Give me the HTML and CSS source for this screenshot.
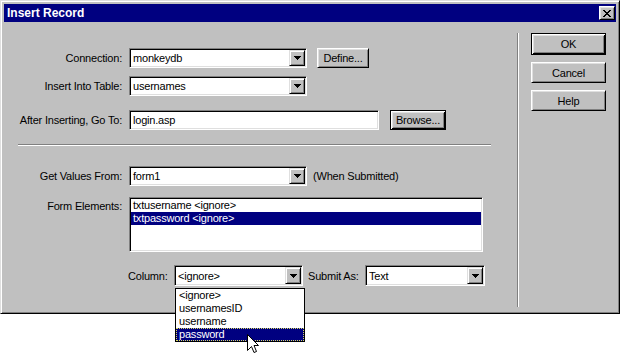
FILE: index.html
```html
<!DOCTYPE html>
<html lang="en">

<head>
    <meta charset="UTF-8">
    <title>Insert Record</title>
    <link rel="stylesheet" href="styles.css">
</head>

<body>
    <section class="dialog">
        <header class="titlebar">
            <span class="title">Insert Record</span>
            <button class="close">
                <svg width="8" height="7" viewBox="0 0 8 7"><path d="M0 0h2v1H0zM6 0h2v1H6zM1 1h2v1H1zM5 1h2v1H5zM2 2h4v1H2zM3 3h2v1H3zM2 4h4v1H2zM1 5h2v1H1zM5 5h2v1H5zM0 6h2v1H0zM6 6h2v1H6z"/></svg>
            </button>
        </header>

        <div class="dialog-body">
            <main class="form">
                <div class="row">
                    <label class="lbl">Connection:</label>
                    <div class="combo w-178"><span class="value">monkeydb</span><span class="drop"><svg width="7" height="4" viewBox="0 0 7 4"><path d="M0 0h7v1H0zM1 1h5v1H1zM2 2h3v1H2zM3 3h1v1H3z"/></svg></span></div>
                    <button class="btn define">Define...</button>
                </div>

                <div class="row r-table">
                    <label class="lbl">Insert Into Table:</label>
                    <div class="combo w-178"><span class="value">usernames</span><span class="drop"><svg width="7" height="4" viewBox="0 0 7 4"><path d="M0 0h7v1H0zM1 1h5v1H1zM2 2h3v1H2zM3 3h1v1H3z"/></svg></span></div>
                </div>

                <div class="row r-goto">
                    <label class="lbl">After Inserting, Go To:</label>
                    <div class="field w-250"><span class="value">login.asp</span></div>
                    <button class="btn default browse">Browse...</button>
                </div>

                <hr class="sep">

                <div class="row">
                    <label class="lbl">Get Values From:</label>
                    <div class="combo w-178"><span class="value">form1</span><span class="drop"><svg width="7" height="4" viewBox="0 0 7 4"><path d="M0 0h7v1H0zM1 1h5v1H1zM2 2h3v1H2zM3 3h1v1H3z"/></svg></span></div>
                    <span class="note">(When Submitted)</span>
                </div>

                <div class="row r-list">
                    <label class="lbl">Form Elements:</label>
                    <div class="listbox">
                        <div class="opt">txtusername &lt;ignore&gt;</div>
                        <div class="opt sel">txtpassword &lt;ignore&gt;</div>
                    </div>
                </div>

                <div class="row r-column">
                    <label class="col-lbl">Column:</label>
                    <div class="combo w-129"><span class="value">&lt;ignore&gt;</span><span class="drop"><svg width="7" height="4" viewBox="0 0 7 4"><path d="M0 0h7v1H0zM1 1h5v1H1zM2 2h3v1H2zM3 3h1v1H3z"/></svg></span></div>
                    <label class="submit-lbl">Submit As:</label>
                    <div class="combo w-120"><span class="value">Text</span><span class="drop"><svg width="7" height="4" viewBox="0 0 7 4"><path d="M0 0h7v1H0zM1 1h5v1H1zM2 2h3v1H2zM3 3h1v1H3z"/></svg></span></div>
                </div>
            </main>

            <div class="vsep"></div>

            <aside class="actions">
                <button class="btn default">OK</button>
                <button class="btn">Cancel</button>
                <button class="btn">Help</button>
            </aside>
        </div>

        <!-- open dropdown of the Column combo -->
        <ul class="droplist">
            <li>&lt;ignore&gt;</li>
            <li>usernamesID</li>
            <li>username</li>
            <li class="sel">password</li>
        </ul>

        <svg class="cursor" width="13" height="21" viewBox="0 0 13 21">
            <path d="M0.5 0.5V16.5L4.5 12.5L7 18.5L9.5 17.5L7 11.5H11.5Z" fill="#fff" stroke="#000" stroke-width="1" stroke-linejoin="miter"/>
        </svg>
    </section>
</body>

</html>
```

FILE: styles.css
```css
* {
    box-sizing: border-box;
}

html,
body {
    min-height: 100vh;
}

body {
    margin: 0;
    background-color: #fff;
    font-family: "Liberation Sans", Arial, sans-serif;
    font-size: 11px;
    letter-spacing: -0.2px;
    color: #000;
}

.dialog {
    position: relative;
    width: 620px;
    height: 314px;
    padding: 3px;
    background-color: #c0c0c0;
    border: 1px solid;
    border-color: #dfdfdf #000 #000 #dfdfdf;
    box-shadow: inset 1px 1px #fff, inset -1px -1px #808080;
    display: flex;
    flex-direction: column;
}

/* title bar */
.titlebar {
    height: 18px;
    flex-shrink: 0;
    background-color: #000080;
    display: flex;
    align-items: center;
    justify-content: space-between;
    padding: 0 1px 0 3px;
}

.title {
    color: #fff;
    font-weight: bold;
    font-size: 12px;
    letter-spacing: 0;
}

.close {
    width: 16px;
    height: 14px;
    padding: 0;
    background-color: #c0c0c0;
    border: 1px solid;
    border-color: #fff #000 #000 #fff;
    box-shadow: inset 1px 1px #dfdfdf, inset -1px -1px #808080;
    display: flex;
    align-items: center;
    justify-content: center;
}

/* body */
.dialog-body {
    flex: 1;
    display: flex;
}

.form {
    width: 513px;
    padding-top: 26px;
}

.row {
    display: flex;
    align-items: center;
    height: 20px;
}

.lbl {
    width: 118px;
    margin-right: 7px;
    text-align: right;
    flex-shrink: 0;
    white-space: nowrap;
}

.r-table {
    margin-top: 8px;
}

.r-goto {
    margin-top: 14px;
}

.sep {
    width: 473px;
    height: 2px;
    margin: 14px 0 20px 14px;
    border: 0;
    border-top: 1px solid #808080;
    border-bottom: 1px solid #fff;
}

.note {
    margin-left: 6px;
}

.r-list {
    margin-top: 11px;
    height: 55px;
    align-items: flex-start;
}

.r-list .lbl {
    padding-top: 3px;
}

.r-column {
    margin-top: 13px;
    margin-left: 124px;
    height: 21px;
}

.col-lbl {
    width: 46px;
    flex-shrink: 0;
}

.submit-lbl {
    width: 62px;
    padding-left: 5px;
    flex-shrink: 0;
}

/* sunken fields */
.combo,
.field,
.listbox {
    height: 100%;
    padding: 1px;
    background-color: #fff;
    border: 1px solid;
    border-color: #808080 #fff #fff #808080;
    box-shadow: inset 1px 1px #000, inset -1px -1px #dfdfdf;
    display: flex;
}

.w-178 { width: 178px; }
.w-250 { width: 250px; }
.w-129 { width: 129px; }
.w-120 { width: 120px; }

.value {
    flex: 1;
    padding-left: 2px;
    white-space: nowrap;
    overflow: hidden;
    display: flex;
    align-items: center;
}

.drop {
    width: 16px;
    flex-shrink: 0;
    background-color: #c0c0c0;
    border: 1px solid;
    border-color: #dfdfdf #000 #000 #dfdfdf;
    box-shadow: inset 1px 1px #fff, inset -1px -1px #808080;
    display: flex;
    align-items: center;
    justify-content: center;
}

.listbox {
    width: 354px;
    flex-direction: column;
}

.opt {
    height: 13px;
    line-height: 13px;
    padding-left: 2px;
    white-space: nowrap;
}

.opt.sel {
    background-color: #000080;
    color: #fff;
}

/* buttons */
.btn {
    font: inherit;
    letter-spacing: inherit;
    color: #000;
    padding: 0;
    height: 21px;
    background-color: #c0c0c0;
    border: 1px solid;
    border-color: #fff #000 #000 #fff;
    box-shadow: inset 1px 1px #dfdfdf, inset -1px -1px #808080;
}

.btn.default {
    border-color: #000;
    box-shadow: inset 1px 1px #fff, inset -1px -1px #000, inset 2px 2px #dfdfdf, inset -2px -2px #808080;
}

.define {
    width: 52px;
    height: 20px;
    margin-left: 10px;
}

.browse {
    width: 56px;
    height: 20px;
    margin-left: 11px;
}

.vsep {
    width: 2px;
    margin: 11px 0 3px;
    border-left: 1px solid #808080;
    border-right: 1px solid #fff;
}

.actions {
    padding: 11px 0 0 12px;
    display: flex;
    flex-direction: column;
    gap: 7px;
}

.actions .btn {
    width: 75px;
}

.actions .btn.default {
    height: 22px;
}

/* open dropdown list, lies over the dialog edge */
.droplist {
    position: absolute;
    left: 174px;
    top: 287px;
    z-index: 2;
    width: 130px;
    margin: 0;
    padding: 0;
    list-style: none;
    background-color: #fff;
    border: 1px solid #000;
}

.droplist li {
    height: 13px;
    line-height: 11px;
    padding-left: 2px;
    border: 1px solid transparent;
    white-space: nowrap;
}

.droplist li.sel {
    background-color: #000080;
    color: #fff;
    border: 1px dotted #d8d860;
}

.cursor {
    position: absolute;
    left: 246px;
    top: 333px;
    z-index: 3;
}
```
